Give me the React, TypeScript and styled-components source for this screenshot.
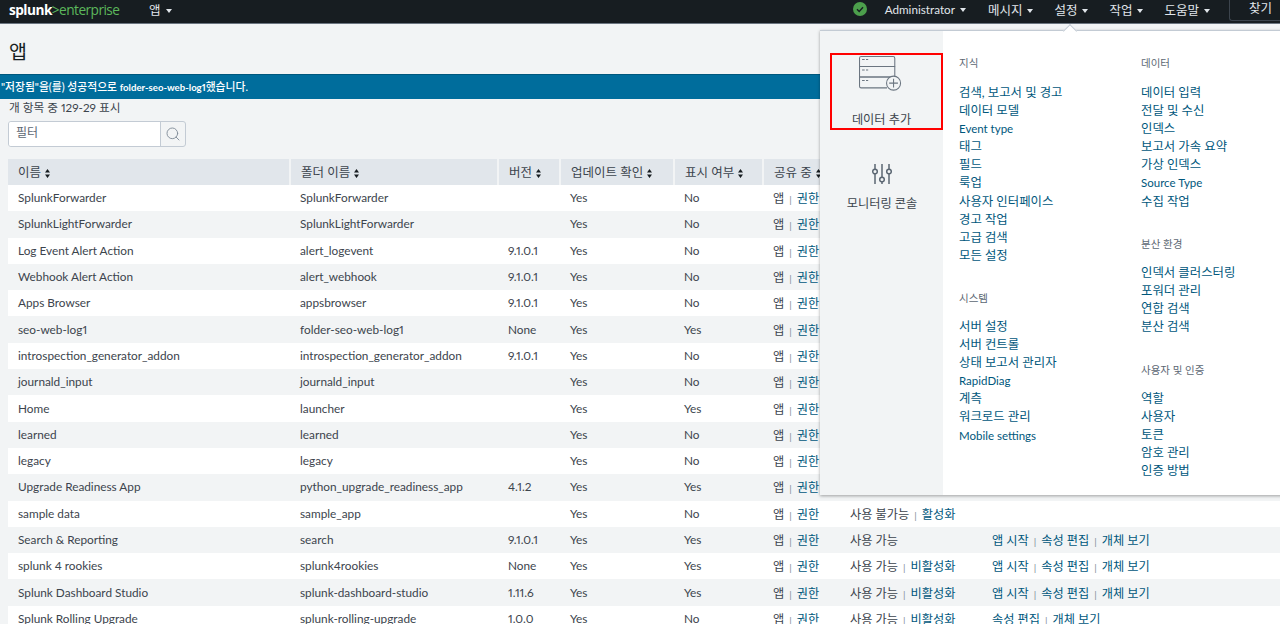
import React from 'react';
import styled, { createGlobalStyle } from 'styled-components';
import { Search } from 'lucide-react';

const GlobalStyle = createGlobalStyle`
  html, body {
    margin: 0;
    height: 100%;
    overflow: hidden;
    background: #f2f4f5;
  }
  body {
    font-family: "Lato", "Noto Sans CJK KR", sans-serif;
    font-size: 12.5px;
    font-variant-numeric: proportional-nums;
    color: #3c444d;
  }
`;

const Page = styled.div`
  position: relative;
  width: 1280px;
  height: 624px;
  overflow: hidden;
`;

const TopBar = styled.header`
  display: flex;
  justify-content: space-between;
  height: 23px;
  background: #171d21;
  border-bottom: 1px solid #6b7580;
  color: #e1e6eb;
`;

const BarGroup = styled.div`
  display: flex;
  align-items: center;
  height: 18px;
`;

const Logo = styled.div`
  margin-left: 9px;
  width: 140px;
  font-family: "Open Sans", sans-serif;
  font-size: 13.7px;
  letter-spacing: -0.55px;
  color: #5cb85c;
  span {
    color: #fff;
    font-weight: 700;
  }
`;

const Caret = styled.i`
  display: inline-block;
  margin-left: 5px;
  vertical-align: 2px;
  border-left: 3.5px solid transparent;
  border-right: 3.5px solid transparent;
  border-top: 4px solid currentColor;
`;

const NavItem = styled.div<{ $gap: number; $latin?: boolean }>`
  margin-right: ${p => p.$gap}px;
  font-size: ${p => (p.$latin ? 11.7 : 12.5)}px;
  white-space: nowrap;
`;

const FindBox = styled.div`
  align-self: flex-start;
  width: 51px;
  height: 21px;
  box-sizing: border-box;
  padding-left: 19px;
  line-height: 17px;
  font-size: 12.5px;
  border-left: 1px solid #3c444d;
  border-bottom: 1px solid #3c444d;
  border-radius: 0 0 0 3px;
`;

const StatusIcon = styled.svg`
  margin-right: 18px;
`;

const Title = styled.h1`
  margin: 0;
  padding: 16px 0 0 9px;
  height: 34px;
  font-size: 19.5px;
  font-weight: 400;
  line-height: 24px;
  color: #171d21;
`;

const Banner = styled.div`
  height: 25px;
  line-height: 23px;
  background: #006d9c;
  border-top: 1px solid #00587d;
  box-sizing: border-box;
  color: #fff;
  font-size: 10.8px;
  font-weight: 500;
  padding-left: 1px;
  white-space: nowrap;
  b {
    font-size: 9.6px;
    font-weight: 700;
  }
`;

const Count = styled.div`
  height: 22px;
  padding-left: 9px;
  line-height: 17px;
  font-size: 11.7px;
`;

const FilterRow = styled.div`
  display: flex;
  width: 178px;
  height: 26px;
  margin-left: 8px;
  box-sizing: border-box;
  border: 1px solid #c3cbd4;
  border-radius: 3px;
  overflow: hidden;
`;

const FilterInput = styled.div`
  flex: 1;
  background: #fff;
  padding-left: 7px;
  line-height: 22px;
  font-size: 12px;
  color: #5c6773;
`;

const FilterButton = styled.div`
  width: 25px;
  box-sizing: border-box;
  display: flex;
  align-items: center;
  justify-content: center;
  border-left: 1px solid #c3cbd4;
  color: #818d99;
`;

const Table = styled.table`
  margin: 12px 0 0 8px;
  width: 1272px;
  table-layout: fixed;
  border-collapse: collapse;
`;

const Th = styled.th<{ $w: number }>`
  width: ${p => p.$w}px;
  height: 26px;
  padding: 0 0 2px 10px;
  box-sizing: border-box;
  text-align: left;
  font-weight: 400;
  font-size: 12.5px;
  background: #e1e6eb;
  border-right: 2px solid #f2f4f5;
  color: #3c444d;
  white-space: nowrap;
  overflow: hidden;
`;

const SortIcon = styled.svg`
  margin-left: 4px;
  vertical-align: -1px;
`;

const Tr = styled.tr`
  height: 26.31px;
  background: #fff;
  &:nth-child(even) {
    background: #f2f4f5;
  }
`;

const Td = styled.td<{ $kr?: boolean }>`
  padding: 0 0 ${p => (p.$kr ? 0 : 1)}px 10px;
  font-size: ${p => (p.$kr ? 12.2 : 11.8)}px;
  white-space: nowrap;
  overflow: hidden;
  color: #3c444d;
`;

const A = styled.span`
  color: #00577c;
`;

const Sep = styled.span`
  margin: 0 5px;
  color: #818d99;
  font-size: 10px;
`;

const Menu = styled.div`
  position: absolute;
  left: 820px;
  top: 30px;
  width: 470px;
  height: 465px;
  display: flex;
  background: #fff;
  border-top: 1px solid #c3cbd4;
  box-sizing: border-box;
  box-shadow: 0 1px 3px rgba(0, 0, 0, 0.35);
`;

const MenuArrow = styled.div`
  position: absolute;
  left: 245px;
  top: -5px;
  width: 9px;
  height: 9px;
  background: #fff;
  border-left: 1px solid #c3cbd4;
  border-top: 1px solid #c3cbd4;
  transform: rotate(45deg);
`;

const Sidebar = styled.div`
  width: 123px;
  background: #f2f4f5;
  padding-top: 22px;
  box-sizing: border-box;
`;

const AddData = styled.div`
  width: 113px;
  height: 77px;
  margin-left: 10px;
  box-sizing: border-box;
  border: 2px solid #f00;
  display: flex;
  flex-direction: column;
  align-items: center;
  padding: 1px 10px 0 0;
  font-size: 12.2px;
  white-space: nowrap;
  svg {
    margin: 0 0 19px -3px;
  }
`;

const Monitoring = styled.div`
  display: flex;
  flex-direction: column;
  align-items: center;
  margin: 33px 0 0 1px;
  font-size: 12.2px;
  svg {
    margin-bottom: 9px;
  }
`;

const MenuCol = styled.div<{ $w: number }>`
  width: ${p => p.$w}px;
  padding: 23px 0 0 16px;
  box-sizing: border-box;
`;

const SectionTitle = styled.div`
  height: 18px;
  line-height: 18px;
  margin-bottom: 11px;
  font-size: 10.5px;
  color: #5c6773;
`;

const Section = styled.div`
  margin-bottom: 25px;
  &:first-child {
    margin-bottom: 24px;
  }
  &:first-child ${SectionTitle} {
    margin-bottom: 12px;
  }
`;

const MenuLink = styled.div<{ $latin: boolean }>`
  height: 18.1px;
  line-height: 18px;
  font-size: ${p => (p.$latin ? 11.5 : 12.4)}px;
  color: #00577c;
  white-space: nowrap;
`;

const CaretItem = ({ label, gap, latin }: { label: string; gap: number; latin?: boolean }) => (
  <NavItem $gap={gap} $latin={latin}>
    {label}
    <Caret />
  </NavItem>
);

const Sort = () => (
  <SortIcon width="5" height="9" viewBox="0 0 5 9">
    <path d="M2.5 0 5 3.4H0zM2.5 9 0 5.6h5z" fill="#171d21" />
  </SortIcon>
);

const columns: [string, number][] = [
  ['이름', 282],
  ['폴더 이름', 208],
  ['버전', 62],
  ['업데이트 확인', 114],
  ['표시 여부', 89],
  ['공유 중', 77],
  ['상태', 142],
  ['작업', 298],
];

type Row = [string, string, string, string, string, string, string];

const rows: Row[] = [
  ['SplunkForwarder', 'SplunkForwarder', '', 'Yes', 'No', 'off', ''],
  ['SplunkLightForwarder', 'SplunkLightForwarder', '', 'Yes', 'No', 'off', ''],
  ['Log Event Alert Action', 'alert_logevent', '9.1.0.1', 'Yes', 'No', 'on', 'edit'],
  ['Webhook Alert Action', 'alert_webhook', '9.1.0.1', 'Yes', 'No', 'on', 'edit'],
  ['Apps Browser', 'appsbrowser', '9.1.0.1', 'Yes', 'No', 'on', 'edit'],
  ['seo-web-log1', 'folder-seo-web-log1', 'None', 'Yes', 'Yes', 'on', 'full'],
  ['introspection_generator_addon', 'introspection_generator_addon', '9.1.0.1', 'Yes', 'No', 'on', 'edit'],
  ['journald_input', 'journald_input', '', 'Yes', 'No', 'on', 'edit'],
  ['Home', 'launcher', '', 'Yes', 'Yes', 'on', 'full'],
  ['learned', 'learned', '', 'Yes', 'No', 'on', 'edit'],
  ['legacy', 'legacy', '', 'Yes', 'No', 'off', ''],
  ['Upgrade Readiness App', 'python_upgrade_readiness_app', '4.1.2', 'Yes', 'Yes', 'on', 'full'],
  ['sample data', 'sample_app', '', 'Yes', 'No', 'off', ''],
  ['Search & Reporting', 'search', '9.1.0.1', 'Yes', 'Yes', 'locked', 'full'],
  ['splunk 4 rookies', 'splunk4rookies', 'None', 'Yes', 'Yes', 'on', 'full'],
  ['Splunk Dashboard Studio', 'splunk-dashboard-studio', '1.11.6', 'Yes', 'Yes', 'on', 'full'],
  ['Splunk Rolling Upgrade', 'splunk-rolling-upgrade', '1.0.0', 'Yes', 'No', 'on', 'edit'],
];

const Status = ({ kind }: { kind: string }) => {
  if (kind === 'locked') return <>사용 가능</>;
  if (kind === 'off') {
    return (
      <>
        사용 불가능<Sep>|</Sep>
        <A>활성화</A>
      </>
    );
  }
  return (
    <>
      사용 가능<Sep>|</Sep>
      <A>비활성화</A>
    </>
  );
};

const Actions = ({ kind }: { kind: string }) => {
  if (!kind) return null;
  return (
    <>
      {kind === 'full' && (
        <>
          <A>앱 시작</A>
          <Sep>|</Sep>
        </>
      )}
      <A>속성 편집</A>
      <Sep>|</Sep>
      <A>개체 보기</A>
    </>
  );
};

const menuLeft = [
  { title: '지식', links: ['검색, 보고서 및 경고', '데이터 모델', 'Event type', '태그', '필드', '룩업', '사용자 인터페이스', '경고 작업', '고급 검색', '모든 설정'] },
  { title: '시스템', links: ['서버 설정', '서버 컨트롤', '상태 보고서 관리자', 'RapidDiag', '계측', '워크로드 관리', 'Mobile settings'] },
];

const menuRight = [
  { title: '데이터', links: ['데이터 입력', '전달 및 수신', '인덱스', '보고서 가속 요약', '가상 인덱스', 'Source Type', '수집 작업'] },
  { title: '분산 환경', links: ['인덱서 클러스터링', '포워더 관리', '연합 검색', '분산 검색'] },
  { title: '사용자 및 인증', links: ['역할', '사용자', '토큰', '암호 관리', '인증 방법'] },
];

const MenuSections = ({ data }: { data: { title: string; links: string[] }[] }) => (
  <>
    {data.map(s => (
      <Section key={s.title}>
        <SectionTitle>{s.title}</SectionTitle>
        {s.links.map(l => (
          <MenuLink key={l} $latin={/^[A-Za-z ]+$/.test(l)}>
            {l}
          </MenuLink>
        ))}
      </Section>
    ))}
  </>
);

const App = () => (
  <Page>
    <GlobalStyle />
    <TopBar>
      <BarGroup>
        <Logo>
          <span>splunk</span>&gt;enterprise
        </Logo>
        <CaretItem label="앱" gap={0} />
      </BarGroup>
      <BarGroup>
        <StatusIcon width="14" height="14" viewBox="0 0 14 14">
          <circle cx="7" cy="7" r="7" fill="#4c9f4c" />
          <path d="M4 7.2 6.2 9.4 10 5.2" fill="none" stroke="#171d21" strokeWidth="1.4" />
        </StatusIcon>
        <CaretItem label="Administrator" gap={22} latin />
        <CaretItem label="메시지" gap={21} />
        <CaretItem label="설정" gap={21} />
        <CaretItem label="작업" gap={21} />
        <CaretItem label="도움말" gap={19} />
        <FindBox>찾기</FindBox>
      </BarGroup>
    </TopBar>
    <Title>앱</Title>
    <Banner>
      "저장됨"을(를) 성공적으로 <b>folder-seo-web-log1</b>했습니다.
    </Banner>
    <Count>개 항목 중 129-29 표시</Count>
    <FilterRow>
      <FilterInput>필터</FilterInput>
      <FilterButton>
        <Search size={16} strokeWidth={1.4} />
      </FilterButton>
    </FilterRow>
    <Table>
      <thead>
        <tr>
          {columns.map(([label, w]) => (
            <Th key={label} $w={w}>
              {label}
              {label !== '상태' && label !== '작업' && <Sort />}
            </Th>
          ))}
        </tr>
      </thead>
      <tbody>
        {rows.map(r => (
          <Tr key={r[1]}>
            <Td>{r[0]}</Td>
            <Td>{r[1]}</Td>
            <Td>{r[2]}</Td>
            <Td>{r[3]}</Td>
            <Td>{r[4]}</Td>
            <Td $kr>
              앱<Sep>|</Sep>
              <A>권한</A>
            </Td>
            <Td $kr>
              <Status kind={r[5]} />
            </Td>
            <Td $kr>
              <Actions kind={r[6]} />
            </Td>
          </Tr>
        ))}
      </tbody>
    </Table>
    <Menu>
      <MenuArrow />
      <Sidebar>
        <AddData>
          <svg width="48" height="40" viewBox="0 0 48 40" fill="none" stroke="#6b7580" strokeWidth="1.2">
            <path d="M.6 2.5Q.6.6 2.5.6h36.5q1.9 0 1.9 1.9v9.5H.6z" />
            <path d="M.6 12v12h40.3V12" />
            <path d="M.6 24v10.5q0 1.9 1.9 1.9h29.5M.6 24h35" />
            <path d="M3.5 4h3M8 4h2.5M3.5 16h3M8 16h2.5M3.5 28h3M8 28h2.5" />
            <circle cx="39.5" cy="31" r="8" fill="#f2f4f5" />
            <path d="M39.5 26v10M34.5 31h10" />
          </svg>
          데이터 추가
        </AddData>
        <Monitoring>
          <svg width="20" height="22" viewBox="0 0 20 22" fill="none" stroke="#5c6773" strokeWidth="1.5">
            <path d="M3 1v5M3 11v10M10 1v13M10 19v2M17 1v5M17 11v10" />
            <circle cx="3" cy="8.5" r="2.3" />
            <circle cx="10" cy="16.5" r="2.3" />
            <circle cx="17" cy="8.5" r="2.3" />
          </svg>
          모니터링 콘솔
        </Monitoring>
      </Sidebar>
      <MenuCol $w={182}>
        <MenuSections data={menuLeft} />
      </MenuCol>
      <MenuCol $w={165}>
        <MenuSections data={menuRight} />
      </MenuCol>
    </Menu>
  </Page>
);

export default App;
